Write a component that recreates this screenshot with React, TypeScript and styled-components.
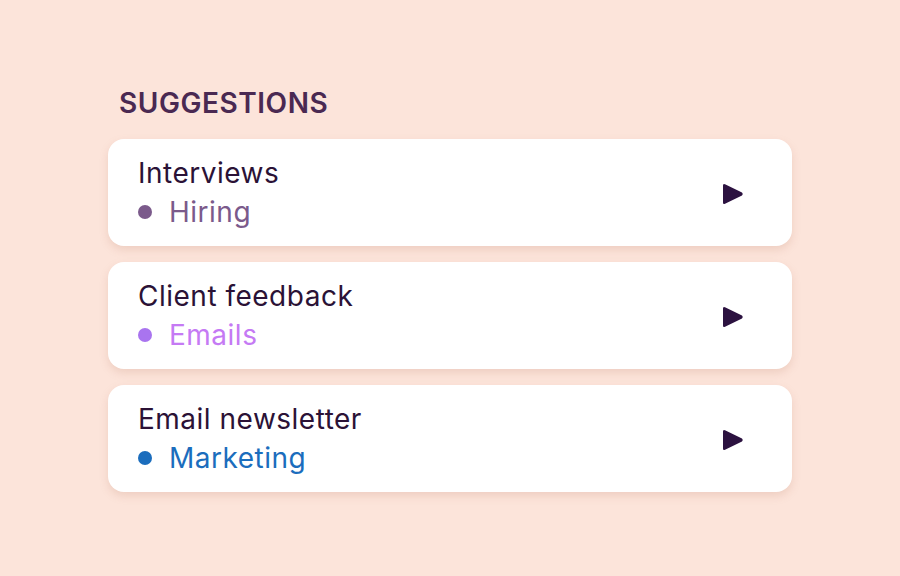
import styled, { createGlobalStyle } from 'styled-components'

const GlobalStyle = createGlobalStyle`
  html, body {
    margin: 0;
    padding: 0;
    background: #fce4da;
  }
  body {
    font-family: Inter, 'Noto Sans', sans-serif;
  }
`

const Page = styled.div`
  width: 900px;
  height: 576px;
  background: #fce4da;
  box-sizing: border-box;
  padding: 83px 108px 0 108px;
`

const Heading = styled.h2`
  margin: 0 0 16px 11px;
  font-size: 28px;
  font-weight: 600;
  line-height: 40px;
  color: #4a2952;
  letter-spacing: 0.55px;
`

const List = styled.div`
  display: flex;
  flex-direction: column;
  gap: 16px;
`

const Card = styled.div`
  height: 107px;
  box-sizing: border-box;
  background: #ffffff;
  border-radius: 16px;
  box-shadow: 0 4px 8px rgba(190, 130, 110, 0.22);
  display: flex;
  align-items: center;
  justify-content: space-between;
  padding: 0 48px 0 30px;
`

const Text = styled.div`
  display: flex;
  flex-direction: column;
  gap: 5px;
  margin-bottom: 1px;
`

const Title = styled.div`
  font-size: 28px;
  line-height: 34px;
  letter-spacing: 0.5px;
  color: #2b1236;
`

const Tag = styled.div<{ $color: string; $dot: string }>`
  display: flex;
  align-items: center;
  gap: 17px;
  font-size: 28px;
  line-height: 34px;
  letter-spacing: 0.5px;
  color: ${(p) => p.$color};

  &::before {
    content: '';
    width: 14px;
    height: 14px;
    border-radius: 50%;
    background: ${(p) => p.$dot};
    flex-shrink: 0;
  }
`

const PlayIcon = styled.svg`
  flex-shrink: 0;
  margin-top: 3px;
`

const Play = () => (
  <PlayIcon width="22" height="24" viewBox="0 0 22 24">
    <path
      d="M1 3.4 Q1 1.2 3 2.2 L20 10.6 Q21.6 12 20 13.4 L3 21.8 Q1 22.8 1 20.6 Z"
      fill="#2c1240"
    />
  </PlayIcon>
)

const items = [
  { title: 'Interviews', tag: 'Hiring', color: '#7b5a8b', dot: '#7b5a8b' },
  { title: 'Client feedback', tag: 'Emails', color: '#c57af4', dot: '#a974ef' },
  { title: 'Email newsletter', tag: 'Marketing', color: '#1b6dbd', dot: '#1b6dbd' },
]

export default function App() {
  return (
    <Page>
      <GlobalStyle />
      <Heading>SUGGESTIONS</Heading>
      <List>
        {items.map((it) => (
          <Card key={it.title}>
            <Text>
              <Title>{it.title}</Title>
              <Tag $color={it.color} $dot={it.dot}>
                {it.tag}
              </Tag>
            </Text>
            <Play />
          </Card>
        ))}
      </List>
    </Page>
  )
}
